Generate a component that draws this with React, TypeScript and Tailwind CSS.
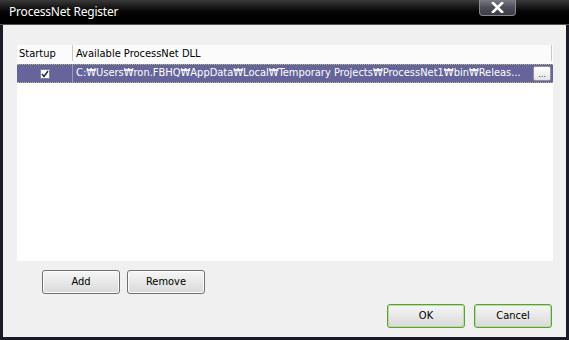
import React from 'react'

const font = { fontFamily: '"DejaVu Sans Condensed", "Liberation Sans", "Noto Sans CJK KR", sans-serif' }

const Btn: React.FC<{ label: string; primary?: boolean }> = ({ label, primary }) => (
  <div
    className={
      'w-[78px] h-[24px] rounded-[3px] border flex items-center justify-center text-[11px] text-black bg-gradient-to-b from-[#f6f6f6] via-[#e8e8e8] to-[#d9d9d9] ' +
      (primary ? 'border-[#5f9d3c] shadow-[inset_0_0_0_1px_#b7e09a]' : 'border-[#707070] shadow-[inset_0_0_0_1px_#fcfcfc]')
    }
  >
    {label}
  </div>
)

export default function App() {
  return (
    <div className="w-[569px] h-[340px] bg-[#1b1b26] flex flex-col overflow-hidden" style={font}>
      {/* Title bar */}
      <div className="h-[25px] flex items-start bg-gradient-to-b from-[#3a3a3a] via-[#050505] to-[#000000] border-b border-[#555]">
        <div className="pl-[9px] pt-[3px] text-[12px] tracking-[-0.2px] leading-[18px] text-white font-['Noto_Sans',sans-serif]">
          ProcessNet Register
        </div>
        <div className="ml-auto mr-[53px] w-[37px] h-[16px] rounded-b-[4px] border border-t-0 border-[#8a8a8a] bg-gradient-to-b from-[#7a7a84] via-[#4e4e5a] to-[#3c3c48] flex items-center justify-center">
          <svg width="13" height="11" viewBox="0 0 13 11">
            <path d="M2 1 L11 10 M11 1 L2 10" stroke="white" strokeWidth="2.6" strokeLinecap="square" />
          </svg>
        </div>
      </div>

      {/* Client area */}
      <div className="flex-1 mx-[3px] mb-[3px] bg-[#f0f0f0] flex flex-col">
        {/* List */}
        <div className="ml-[14px] mt-[20px] w-[536px] h-[216px] bg-white flex flex-col">
          <div className="h-[19px] flex items-start text-[11px] text-black bg-[#fbfbfb]">
            <div className="w-[56px] pl-[2px] pt-[1px] border-r border-[#c8c8c8] h-[16px]">Startup</div>
            <div className="flex-1 pl-[3px] pt-[1px] border-r border-[#c8c8c8] h-[16px] mr-[1px]">Available ProcessNet DLL</div>
          </div>
          <div className="h-[19px] bg-[#65659b] border-y border-dotted border-[#b8b870] flex items-center text-[11px] text-white">
            <div className="w-[56px] h-full flex items-center justify-center border-r border-[#9a9ab8]">
              <div className="w-[10px] h-[10px] bg-white border border-[#8080a0] flex items-center justify-center">
                <svg width="8" height="8" viewBox="0 0 8 8">
                  <path d="M1 4 L3 6.5 L7 1" stroke="#203050" strokeWidth="1.6" fill="none" />
                </svg>
              </div>
            </div>
            <div className="flex-1 min-w-0 pl-[3px] whitespace-nowrap overflow-hidden">
              C:₩Users₩ron.FBHQ₩AppData₩Local₩Temporary Projects₩ProcessNet1₩bin₩Releas...
            </div>
            <div className="w-[18px] h-[15px] ml-[4px] mr-[2px] shrink-0 rounded-[2px] bg-gradient-to-b from-white to-[#e4e4e4] border border-[#9090a8] flex items-end justify-center text-[#303080] text-[9px] leading-[9px] pb-[1px]">
              ...
            </div>
          </div>
        </div>

        {/* Add/Remove */}
        <div className="ml-[39px] mt-[9px] flex gap-[7px]">
          <Btn label="Add" />
          <Btn label="Remove" />
        </div>

        {/* OK/Cancel */}
        <div className="mt-[10px] mr-[14px] flex justify-end gap-[9px]">
          <Btn label="OK" primary />
          <Btn label="Cancel" primary />
        </div>
      </div>
    </div>
  )
}
